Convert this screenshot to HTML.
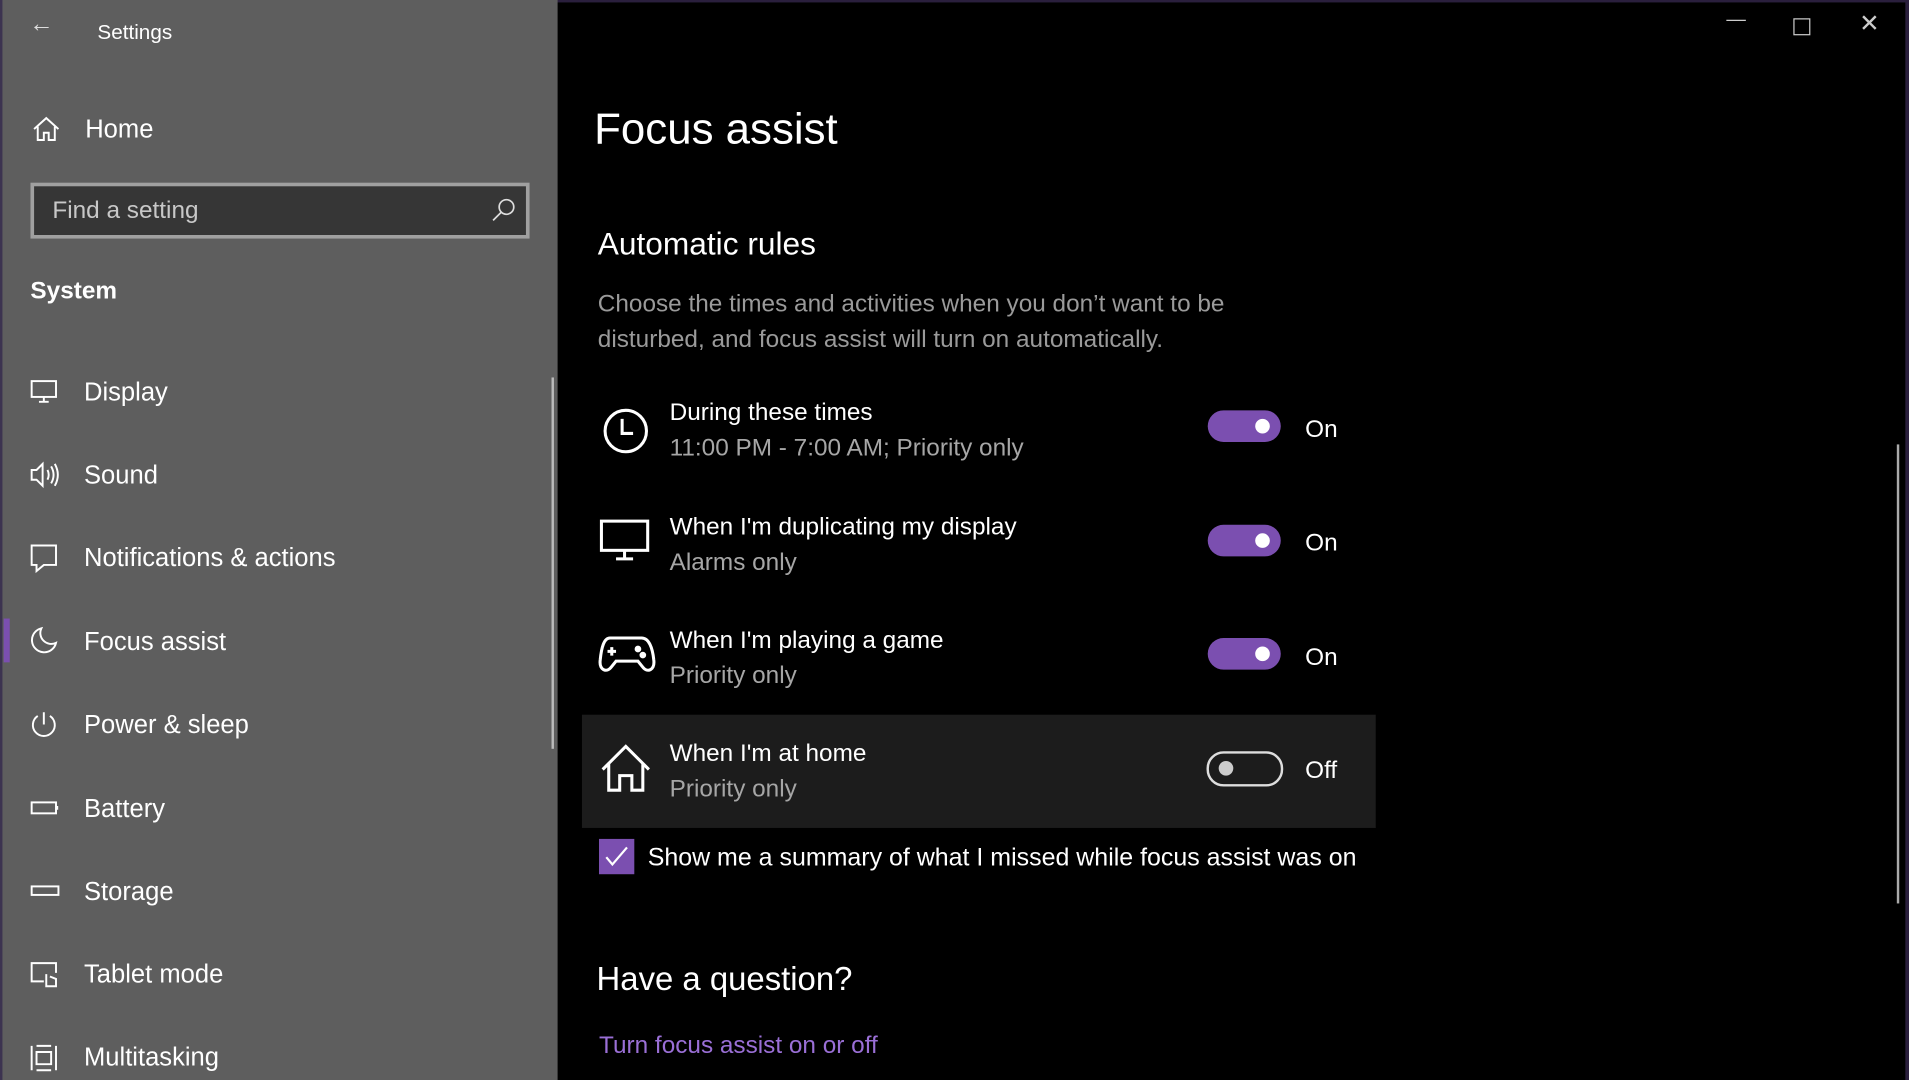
<!DOCTYPE html>
<html><head><meta charset="utf-8"><style>
html,body{margin:0;padding:0;background:#000;overflow:hidden;width:1909px;height:1080px}
#w{position:absolute;left:0;top:0;width:1568px;height:887px;transform:scale(1.21747,1.21758);transform-origin:0 0;font-family:"Liberation Sans",sans-serif;color:#fff;background:#000}
#side{position:absolute;left:0;top:0;width:458px;height:887px;background:#5e5e5e}
.t{position:absolute;white-space:nowrap}
.ic{position:absolute}
.tg{position:absolute;width:60px;height:26px;border-radius:14px;background:#7b4fb0}
.tg::after{content:"";position:absolute;right:9px;top:7px;width:12px;height:12px;border-radius:50%;background:#fff}
.off{background:transparent;border:2px solid #ddd;width:59px;height:25px;left:991px!important}
.off::after{left:8px;right:auto;top:6px;background:#ccc}
.sub{color:#a6a6a6}
</style></head><body><div id="w">
<div style="position:absolute;left:0;top:0;width:1568px;height:2px;background:#2a1f3d"></div>
<div id="side">
 <div style="position:absolute;left:0;top:0;width:2px;height:887px;background:#3c3350"></div>
 <div class="t" style="left:24px;top:9px;font-size:20px;color:#ddd">←</div>
 <div class="t" style="left:80px;top:17px;font-size:17px">Settings</div>
 <svg class="ic" style="left:26px;top:94px" width="24" height="24" viewBox="0 0 24 24" fill="none" stroke="#fff" stroke-width="1.6"><path d="M2 12 12 3l10 9M5 10v11h5v-6h4v6h5V10"/></svg>
 <div class="t" style="left:70px;top:95px;font-size:21px">Home</div>
 <div style="position:absolute;left:25px;top:150px;width:404px;height:40px;border:3px solid #a0a0a0;background:#363636"></div>
 <div class="t" style="left:43px;top:162px;font-size:20px;color:#c8c8c8">Find a setting</div>
 <svg class="ic" style="left:403px;top:162px" width="22" height="22" viewBox="0 0 22 22" fill="none" stroke="#ddd" stroke-width="1.4"><circle cx="13" cy="8" r="6"/><path d="M9 12 2 19"/></svg>
 <div class="t" style="left:25px;top:228px;font-size:20px;font-weight:bold">System</div>
 <div style="position:absolute;left:453px;top:310px;width:2px;height:305px;background:#bbb"></div>
 <div style="position:absolute;left:3px;top:508px;width:5px;height:36px;background:#7b4fb0"></div>
 <svg class="ic" style="left:24px;top:310px" width="24" height="24" viewBox="0 0 24 24" fill="none" stroke="#fff" stroke-width="1.6"><rect x="2" y="3" width="20" height="13"/><path d="M12 16v4M8 20h8"/></svg>
 <div class="t" style="left:69px;top:311px;font-size:21px">Display</div>
 <svg class="ic" style="left:24px;top:378px" width="26" height="24" viewBox="0 0 26 24" fill="none" stroke="#fff" stroke-width="1.6"><path d="M2 8h4l5-5v18l-5-5H2zM15 8q2 4 0 8M18 5q4 7 0 14M21 3q5 9 0 18"/></svg>
 <div class="t" style="left:69px;top:379px;font-size:21px">Sound</div>
 <svg class="ic" style="left:24px;top:446px" width="24" height="26" viewBox="0 0 24 26" fill="none" stroke="#fff" stroke-width="1.6"><path d="M2 2h20v16H12l-6 5v-5H2z"/></svg>
 <div class="t" style="left:69px;top:447px;font-size:21px">Notifications &amp; actions</div>
 <svg class="ic" style="left:24px;top:514px" width="24" height="24" viewBox="0 0 24 24" fill="none" stroke="#fff" stroke-width="1.6"><path d="M10 2a10 10 0 1 0 12 12A9 9 0 0 1 10 2z"/></svg>
 <div class="t" style="left:69px;top:516px;font-size:21px">Focus assist</div>
 <svg class="ic" style="left:24px;top:583px" width="24" height="24" viewBox="0 0 24 24" fill="none" stroke="#fff" stroke-width="1.6"><path d="M12 2v10M7 5a9 9 0 1 0 10 0"/></svg>
 <div class="t" style="left:69px;top:584px;font-size:21px">Power &amp; sleep</div>
 <svg class="ic" style="left:24px;top:652px" width="26" height="24" viewBox="0 0 26 24" fill="none" stroke="#fff" stroke-width="1.6"><rect x="2" y="7" width="20" height="9"/><path d="M23 10v3"/></svg>
 <div class="t" style="left:69px;top:653px;font-size:21px">Battery</div>
 <svg class="ic" style="left:24px;top:720px" width="26" height="24" viewBox="0 0 26 24" fill="none" stroke="#fff" stroke-width="1.6"><rect x="2" y="8" width="22" height="7"/></svg>
 <div class="t" style="left:69px;top:721px;font-size:21px">Storage</div>
 <svg class="ic" style="left:24px;top:788px" width="26" height="26" viewBox="0 0 26 26" fill="none" stroke="#fff" stroke-width="1.6"><path d="M12 18H2V3h20v8"/><path d="M14 12v10h8v-6l-5-2"/></svg>
 <div class="t" style="left:69px;top:789px;font-size:21px">Tablet mode</div>
 <svg class="ic" style="left:24px;top:856px" width="26" height="26" viewBox="0 0 26 26" fill="none" stroke="#fff" stroke-width="1.6"><path d="M2 3v20M22 3v20M6 8h12v10H6zM6 3h12M6 23h12"/></svg>
 <div class="t" style="left:69px;top:857px;font-size:21px">Multitasking</div>
</div>
<div class="t" style="left:1418px;top:8px;font-size:16px;color:#ccc">—</div>
<div style="position:absolute;left:1473px;top:15px;width:12px;height:12px;border:1px solid #ccc"></div>
<div class="t" style="left:1527px;top:7px;font-size:20px;color:#ccc">✕</div>
<div style="position:absolute;left:1558px;top:365px;width:2px;height:377px;background:#aaa"></div>
<div style="position:absolute;left:1565px;top:0;width:3px;height:887px;background:#2a1f3d"></div>
<div class="t" style="left:488px;top:85px;font-size:36px">Focus assist</div>
<div class="t" style="left:491px;top:185px;font-size:26px">Automatic rules</div>
<div class="t sub" style="left:491px;top:236px;font-size:20px;line-height:29px;color:#9a9a9a">Choose the times and activities when you don’t want to be<br>disturbed, and focus assist will turn on automatically.</div>
<div style="position:absolute;left:478px;top:587px;width:652px;height:93px;background:#1c1c1c"></div>
<svg class="ic" style="left:492px;top:332px" width="44" height="44" viewBox="0 0 44 44" fill="none" stroke="#fff" stroke-width="2.5"><circle cx="22" cy="22" r="17"/><path d="M19 12v12h9"/></svg>
<div class="t" style="left:550px;top:328px;font-size:20px">During these times</div>
<div class="t sub" style="left:550px;top:357px;font-size:20px">11:00 PM - 7:00 AM; Priority only</div>
<div class="tg" style="left:992px;top:337px"></div><div class="t" style="left:1072px;top:342px;font-size:20px">On</div>
<svg class="ic" style="left:492px;top:425px" width="44" height="40" viewBox="0 0 44 40" fill="none" stroke="#fff" stroke-width="2.5"><rect x="2" y="3" width="38" height="24"/><path d="M21 27v6M14 34h14"/></svg>
<div class="t" style="left:550px;top:422px;font-size:20px">When I'm duplicating my display</div>
<div class="t sub" style="left:550px;top:451px;font-size:20px">Alarms only</div>
<div class="tg" style="left:992px;top:431px"></div><div class="t" style="left:1072px;top:435px;font-size:20px">On</div>
<svg class="ic" style="left:491px;top:520px" width="48" height="36" viewBox="0 0 48 36" fill="none" stroke="#fff" stroke-width="2.5"><path d="M10 4h26c6 0 9 8 10 18 1 8-5 11-9 6l-4-5H15l-4 5c-4 5-10 2-9-6C3 12 5 4 10 4z"/><path d="M8 15h7M11.5 11.5v7"/><circle cx="33" cy="13" r="1.5" fill="#fff"/><circle cx="37" cy="18" r="1.5" fill="#fff"/></svg>
<div class="t" style="left:550px;top:515px;font-size:20px">When I'm playing a game</div>
<div class="t sub" style="left:550px;top:544px;font-size:20px">Priority only</div>
<div class="tg" style="left:992px;top:524px"></div><div class="t" style="left:1072px;top:529px;font-size:20px">On</div>
<svg class="ic" style="left:493px;top:610px" width="44" height="42" viewBox="0 0 44 42" fill="none" stroke="#fff" stroke-width="2.5"><path d="M2 22 21 3l19 19M7 17v22h9V27h10v12h9V17"/></svg>
<div class="t" style="left:550px;top:608px;font-size:20px">When I'm at home</div>
<div class="t sub" style="left:550px;top:637px;font-size:20px">Priority only</div>
<div class="tg off" style="top:617px"></div><div class="t" style="left:1072px;top:622px;font-size:20px">Off</div>
<div style="position:absolute;left:492px;top:689px;width:29px;height:29px;background:#7b4fb0"></div>
<svg class="ic" style="left:492px;top:689px" width="29" height="29" viewBox="0 0 29 29" fill="none" stroke="#fff" stroke-width="1.8"><path d="M6 15l5 6 12-14"/></svg>
<div class="t" style="left:532px;top:693px;font-size:20.5px">Show me a summary of what I missed while focus assist was on</div>
<div class="t" style="left:490px;top:789px;font-size:27px">Have a question?</div>
<div class="t" style="left:492px;top:848px;font-size:20px;color:#9a6fd6">Turn focus assist on or off</div>
</div></body></html>
